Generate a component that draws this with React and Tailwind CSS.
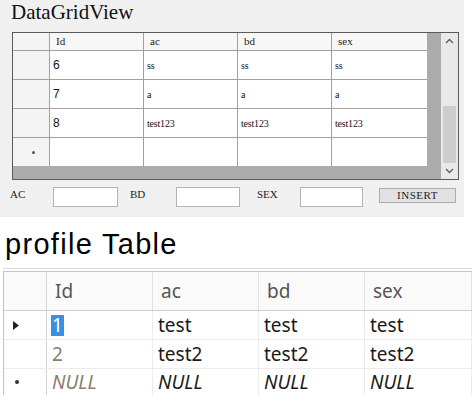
import React from "react";

const serif = { fontFamily: '"Liberation Serif", "DejaVu Serif", serif' };
const sans = { fontFamily: '"Noto Sans", "Open Sans", sans-serif' };

function TopGrid() {
  const cols = ["Id", "ac", "bd", "sex"];
  const rows = [
    ["6", "ss", "ss", "ss"],
    ["7", "a", "a", "a"],
    ["8", "test123", "test123", "test123"],
  ];
  return (
    <div className="ml-[12px] w-[447px] h-[148px] border border-[#5a5a5a] bg-[#ababab] flex">
      <div className="w-[414px] flex flex-col">
        <div className="flex h-[18px] bg-[#f7f7f7] border-b border-[#a0a0a0]">
          <div className="w-[37px] border-r border-[#a0a0a0] bg-[#f4f4f4]" />
          {cols.map((c, i) => (
            <div
              key={c}
              className={`w-[94px] ${i < 3 ? "border-r border-[#a0a0a0]" : ""} text-[11px] leading-[17px] pl-[6px] text-[#222]`}
              style={serif}
            >
              {c}
            </div>
          ))}
        </div>
        {rows.map((r, ri) => (
          <div key={ri} className="flex h-[29px] bg-white border-b border-[#a0a0a0]">
            <div className="w-[37px] border-r border-[#a0a0a0] bg-[#f4f4f4]" />
            {r.map((v, i) => (
              <div
                key={i}
                className={`w-[94px] ${i < 3 ? "border-r border-[#a0a0a0]" : ""} flex items-center pl-[3px] text-[#111]`}
              >
                {i === 0 ? (
                  <span className="text-[12px]" style={{ fontFamily: '"Liberation Sans", Arial, sans-serif' }}>
                    {v}
                  </span>
                ) : (
                  <span className="text-[10px] tracking-[-0.2px]" style={serif}>
                    {v}
                  </span>
                )}
              </div>
            ))}
          </div>
        ))}
        <div className="flex h-[28px] bg-white">
          <div className="w-[37px] border-r border-[#a0a0a0] bg-[#f4f4f4] flex items-center justify-center">
            <div className="w-[3px] h-[3px] rounded-full bg-[#555] ml-[4px]" />
          </div>
          {[0, 1, 2, 3].map((i) => (
            <div key={i} className={`w-[94px] ${i < 3 ? "border-r border-[#a0a0a0]" : ""}`} />
          ))}
        </div>
      </div>
      <div className="flex-1" />
      <div className="w-[17px] h-full bg-[#e9e9e9] flex flex-col items-center">
        <div className="h-[17px] flex items-center justify-center">
          <svg width="9" height="6" viewBox="0 0 9 6">
            <path d="M1 5 L4.5 1.5 L8 5" stroke="#606060" strokeWidth="1.4" fill="none" />
          </svg>
        </div>
        <div className="flex-1 w-full flex flex-col">
          <div className="h-[57px]" />
          <div className="h-[57px] mx-[2px] bg-[#cdcdcd]" />
        </div>
        <div className="h-[17px] flex items-center justify-center">
          <svg width="9" height="6" viewBox="0 0 9 6">
            <path d="M1 1 L4.5 4.5 L8 1" stroke="#606060" strokeWidth="1.4" fill="none" />
          </svg>
        </div>
      </div>
    </div>
  );
}

function FormRow() {
  return (
    <div className="flex items-start mt-[7px] text-[11px] text-[#222]" style={serif}>
      <div className="w-[53px] pl-[10px] leading-[14px]">AC</div>
      <div className="w-[65px] h-[20px] bg-white border border-[#b4b4b4]" />
      <div className="w-[58px] pl-[12px] leading-[14px]">BD</div>
      <div className="w-[64px] h-[20px] bg-white border border-[#b4b4b4]" />
      <div className="w-[60px] pl-[17px] leading-[14px]">SEX</div>
      <div className="w-[63px] h-[20px] bg-white border border-[#b4b4b4]" />
      <div className="w-[16px]" />
      <div className="w-[77px] h-[15px] mt-[1px] bg-[#e1e1e1] border border-[#adadad] flex items-center justify-center leading-[13px] tracking-[0.5px]">
        INSERT
      </div>
    </div>
  );
}

function BottomTable() {
  const cols = ["Id", "ac", "bd", "sex"];
  const widths = ["w-[106px]", "w-[106px]", "w-[106px]", "w-[107px]"];
  return (
    <div className="ml-[3px] w-[469px] border-t border-[#dcdcdc] pt-[2px]" style={sans}>
      <div className="border-l border-t border-[#c4c4c4]">
        <div className="flex h-[39px] bg-[#fafafa] border-b border-[#cfcfcf]">
          <div className="w-[43px] border-r border-[#d4d4d4]" />
          {cols.map((c, i) => (
            <div
              key={c}
              className={`${widths[i]} border-r border-[#e2e2e2] pl-[8px] flex items-center text-[19px] text-[#555]`}
            >
              {c}
            </div>
          ))}
        </div>
        <div className="flex h-[29px] bg-white border-b border-[#ececec]">
          <div className="w-[43px] border-r border-[#d4d4d4] flex items-center pl-[9px]">
            <svg width="6" height="9" viewBox="0 0 6 9">
              <path d="M0 0 L6 4.5 L0 9 Z" fill="#222" />
            </svg>
          </div>
          {["1", "test", "test", "test"].map((v, i) => (
            <div key={i} className={`${widths[i]} border-r border-[#ececec] pl-[5px] flex items-center text-[19px] text-[#1a1a1a]`}>
              {i === 0 ? (
                <span className="bg-[#3a8ee6] text-white leading-[21px] px-[1px] -ml-[1px]">{v}</span>
              ) : (
                v
              )}
            </div>
          ))}
        </div>
        <div className="flex h-[29px] bg-white border-b border-[#ececec]">
          <div className="w-[43px] border-r border-[#d4d4d4]" />
          {["2", "test2", "test2", "test2"].map((v, i) => (
            <div
              key={i}
              className={`${widths[i]} border-r border-[#ececec] pl-[5px] flex items-center text-[19px] ${i === 0 ? "text-[#8a7c6e]" : "text-[#1a1a1a]"}`}
            >
              {v}
            </div>
          ))}
        </div>
        <div className="flex h-[26px] bg-white">
          <div className="w-[43px] border-r border-[#d4d4d4] flex items-center pl-[11px]">
            <div className="w-[4px] h-[4px] rounded-full bg-[#333]" />
          </div>
          {["NULL", "NULL", "NULL", "NULL"].map((v, i) => (
            <div
              key={i}
              className={`${widths[i]} border-r border-[#ececec] pl-[5px] flex items-center text-[19px] italic ${i === 0 ? "text-[#8a7c6e]" : "text-[#1a1a1a]"}`}
            >
              {v}
            </div>
          ))}
        </div>
      </div>
    </div>
  );
}

export default function App() {
  return (
    <div className="w-[474px] h-[401px] bg-white overflow-hidden">
      <div className="w-[464px] h-[217px] bg-[#f0f0f0]">
        <div className="h-[32px] pl-[11px] pt-[1px]">
          <div className="text-[21px] leading-[22px] text-[#111]" style={serif}>
            DataGridView
          </div>
        </div>
        <TopGrid />
        <FormRow />
      </div>
      <div className="h-[51px] pl-[5px] pt-[12px]">
        <div
          className="text-[29px] leading-[30px] tracking-[1.3px] text-black"
          style={{ fontFamily: '"Liberation Sans", Arial, sans-serif' }}
        >
          profile Table
        </div>
      </div>
      <BottomTable />
    </div>
  );
}
